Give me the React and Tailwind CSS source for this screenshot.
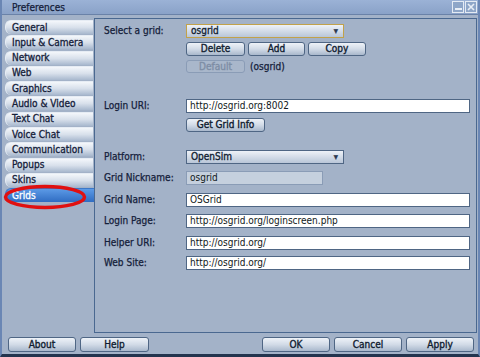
import React from 'react';

const font = { fontFamily: '"DejaVu Sans Condensed", "DejaVu Sans", sans-serif' };

const tabs = [
  'General',
  'Input & Camera',
  'Network',
  'Web',
  'Graphics',
  'Audio & Video',
  'Text Chat',
  'Voice Chat',
  'Communication',
  'Popups',
  'Skins',
  'Grids',
];

const Btn = ({ children, className = '', disabled }) => (
  <div
    className={`flex items-center justify-center rounded-[3px] border text-[10px] leading-none [-webkit-text-stroke:0.35px_currentColor] ${
      disabled
        ? 'border-[#8a9cb6] bg-[#a9b7cb] text-[#7d8da5]'
        : 'border-[#4f6684] bg-gradient-to-b from-[#eef2f8] via-[#d2dbe7] to-[#a9b8cc] text-[#101c30]'
    } ${className}`}
  >
    {children}
  </div>
);

const Combo = ({ value, highlight }) => (
  <div
    className={`flex h-[14px] w-[158px] items-center justify-between border bg-gradient-to-b from-[#eef2f8] to-[#b9c6d8] pl-[4px] pr-[5px] text-[10px] text-[#101c30] [-webkit-text-stroke:0.3px_currentColor] ${
      highlight ? 'border-[#c2a24a]' : 'border-[#4f6684]'
    }`}
  >
    <span>{value}</span>
    <span className="text-[6px] text-[#2a3850]">▼</span>
  </div>
);

const Field = ({ value, w = 'w-[284px]', disabled }) => (
  <div
    className={`flex h-[14px] ${w} items-center border pl-[3px] text-[10px] text-[#101820] ${
      disabled ? 'border-[#8a9cb6] bg-[#c5d0de] text-[#25344c]' : 'border-[#4f6684] bg-white'
    }`}
  >
    {value}
  </div>
);

const Row = ({ label, children, className = '' }) => (
  <div className={`flex items-center ${className}`}>
    <div className="w-[82px] text-[10px] text-[#14203a] [-webkit-text-stroke:0.25px_currentColor]">{label}</div>
    {children}
  </div>
);

export default function App() {
  return (
    <div
      style={font}
      className="relative flex h-[357px] w-[480px] flex-col overflow-hidden border-x-2 border-b-[3px] border-x-[#6a86b4] border-b-[#23344e] bg-[#a3b2c8]"
    >
      {/* Titelleiste */}
      <div className="flex h-[15px] items-center justify-between border-b border-[#6a82a8] bg-gradient-to-b from-[#9bb2d6] to-[#8aa2c8] pl-[10px] pr-[1px]">
        <span className="text-[10px] text-[#14203a] [-webkit-text-stroke:0.25px_currentColor]">Preferences</span>
        <div className="flex gap-[1px]">
          <div className="flex h-[12px] w-[12px] items-end justify-center border border-[#e4ebf4] bg-[#8ea6c8] pb-[2px]">
            <div className="h-[2px] w-[7px] bg-[#e8eef6]" />
          </div>
          <div className="flex h-[12px] w-[12px] items-center justify-center border border-[#e4ebf4] bg-[#8ea6c8]">
            <svg width="8" height="8" viewBox="0 0 8 8">
              <path d="M1 1 L7 7 M7 1 L1 7" stroke="#e8eef6" strokeWidth="1.6" />
            </svg>
          </div>
        </div>
      </div>

      <div className="flex flex-1">
        {/* Tabs */}
        <div className="flex w-[92px] flex-col gap-[1.3px] pl-[3px] pt-[5px]">
          {tabs.map((t) => {
            const active = t === 'Grids';
            return (
              <div
                key={t}
                className={`flex h-[14px] items-center rounded-l-[6px] border-l border-t pl-[6px] text-[10px] leading-none [-webkit-text-stroke:0.3px_currentColor] ${
                  active
                    ? 'w-[90px] border-[#3c78c8] bg-gradient-to-b from-[#5c9ae6] to-[#2f6cc2] text-white'
                    : 'w-[88px] border-[#e6ecf4] bg-gradient-to-b from-[#f4f7fb] via-[#d8e0eb] to-[#a8b8ce] text-[#14203a]'
                }`}
              >
                {t}
              </div>
            );
          })}
        </div>

        {/* Panel */}
        <div className="mb-[1px] mr-[1px] mt-[3px] flex flex-1 flex-col border border-[#4a6890] pl-[9px] pt-[4px]">
          <Row label="Select a grid:">
            <Combo value="osgrid" highlight />
          </Row>
          <div className="ml-[82px] mt-[4px] flex gap-[3px]">
            <Btn className="h-[14px] w-[59px]">Delete</Btn>
            <Btn className="h-[14px] w-[57px]">Add</Btn>
            <Btn className="h-[14px] w-[58px]">Copy</Btn>
          </div>
          <div className="ml-[82px] mt-[3px] flex items-center gap-[5px]">
            <Btn className="h-[13px] w-[59px]" disabled>
              Default
            </Btn>
            <span className="text-[10px] text-[#14203a] [-webkit-text-stroke:0.25px_currentColor]">(osgrid)</span>
          </div>

          <Row label="Login URI:" className="mt-[24px]">
            <Field value="http://osgrid.org:8002" />
          </Row>
          <div className="ml-[82px] mt-[5px]">
            <Btn className="h-[14px] w-[79px]">Get Grid Info</Btn>
          </div>

          <Row label="Platform:" className="mt-[17px]">
            <Combo value="OpenSim" />
          </Row>
          <Row label="Grid Nickname:" className="mt-[6px]">
            <Field value="osgrid" w="w-[137px]" disabled />
          </Row>
          <Row label="Grid Name:" className="mt-[7px]">
            <Field value="OSGrid" />
          </Row>
          <Row label="Login Page:" className="mt-[6px]">
            <Field value="http://osgrid.org/loginscreen.php" />
          </Row>
          <Row label="Helper URI:" className="mt-[7px]">
            <Field value="http://osgrid.org/" />
          </Row>
          <Row label="Web Site:" className="mt-[5px]">
            <Field value="http://osgrid.org/" />
          </Row>
        </div>
      </div>

      {/* Untere Buttons */}
      <div className="flex h-[20px] items-start justify-between pl-[6px] pr-[4px] pt-[3px]">
        <div className="flex gap-[4px]">
          <Btn className="h-[15px] w-[68px]">About</Btn>
          <Btn className="h-[15px] w-[69px]">Help</Btn>
        </div>
        <div className="flex gap-[4px]">
          <Btn className="h-[15px] w-[68px]">OK</Btn>
          <Btn className="h-[15px] w-[68px]">Cancel</Btn>
          <Btn className="h-[15px] w-[68px]">Apply</Btn>
        </div>
      </div>

      {/* Roter Kreis um Grids */}
      <svg className="absolute left-[1px] top-[184px]" width="84" height="26" viewBox="0 0 84 26">
        <ellipse cx="42" cy="13" rx="39.5" ry="10.5" fill="none" stroke="#e01010" strokeWidth="3.5" />
      </svg>
    </div>
  );
}
